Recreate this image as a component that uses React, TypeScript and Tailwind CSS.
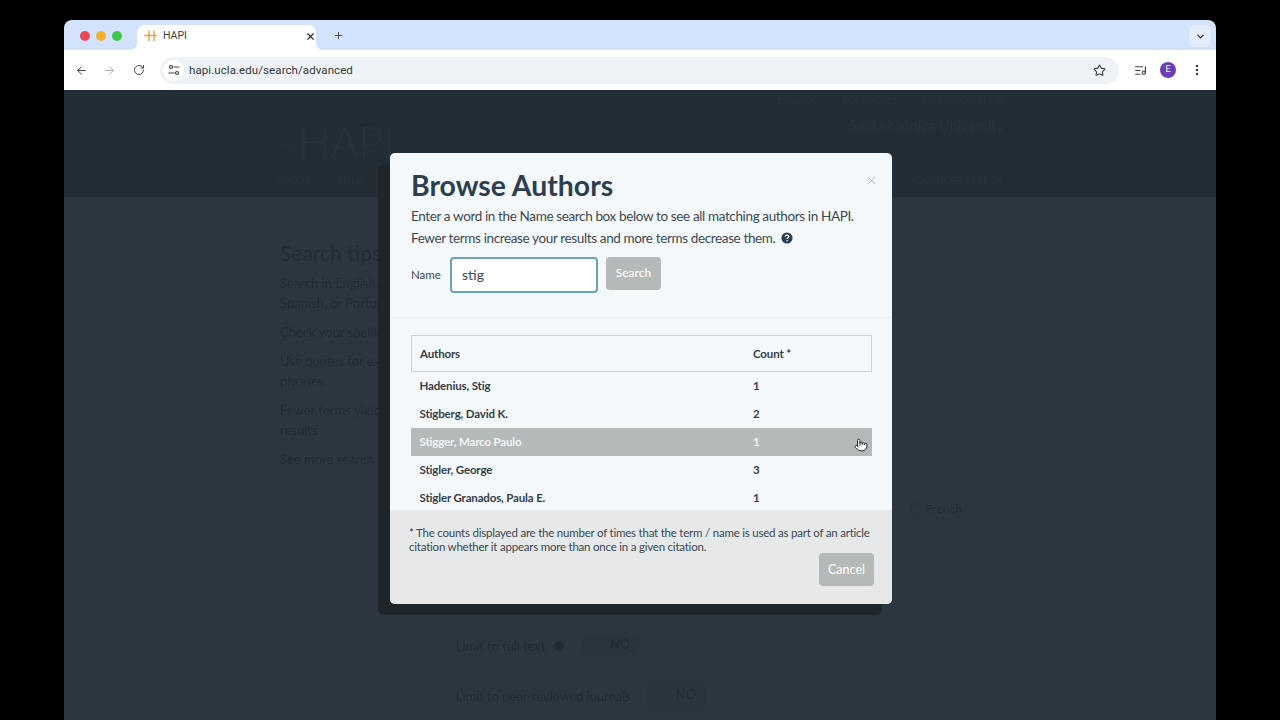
import React from "react";
import { ArrowLeft, ArrowRight, RotateCw, Star, ListMusic, MoreVertical, ChevronDown, X, Plus, Pointer } from "lucide-react";

const rows: [string, string][] = [
  ["Hadenius, Stig", "1"],
  ["Stigberg, David K.", "2"],
  ["Stigger, Marco Paulo", "1"],
  ["Stigler, George", "3"],
  ["Stigler Granados, Paula E.", "1"],
];

function Favicon() {
  return (
    <svg width="14" height="12" viewBox="0 0 14 12" fill="none" stroke="#f0a04b" strokeWidth="1.5">
      <path d="M0 5.5H13M5 0.5V11M10 0.5V11" />
    </svg>
  );
}

function Tune() {
  return (
    <svg width="12" height="12" viewBox="0 0 12 12" fill="none" stroke="#3c4043" strokeWidth="1.2">
      <circle cx="3" cy="3" r="1.5" />
      <path d="M5.5 3H11.5M0.5 9H6.5" />
      <circle cx="9" cy="9" r="1.5" />
    </svg>
  );
}

function Help() {
  return (
    <svg width="12" height="12" viewBox="0 0 12 12" fill="none">
      <circle cx="6" cy="6" r="5.6" fill="#2c3e50" />
      <path d="M4.2 4.6C4.3 3.6 5 3.1 6 3.1C7 3.1 7.8 3.7 7.8 4.6C7.8 5.7 6.1 5.7 6.1 7" stroke="#ffffff" strokeWidth="1.3" />
      <circle cx="6.1" cy="8.8" r="0.8" fill="#ffffff" />
    </svg>
  );
}

function Flare({ side }: { side: "left" | "right" }) {
  return (
    <svg
      width="8"
      height="8"
      viewBox="0 0 8 8"
      className={side === "left" ? "absolute -left-[8px] bottom-0" : "absolute -right-[8px] bottom-0"}
    >
      <path d={side === "left" ? "M8 0V8H0C5 8 8 5 8 0Z" : "M0 0V8H8C3 8 0 5 0 0Z"} fill="#ffffff" />
    </svg>
  );
}

function Background() {
  return (
    <div className="flex-1 flex flex-col bg-[#2b3640] overflow-hidden text-[#212b33] blur-[0.7px] font-['Lato',sans-serif]">
      <div className="h-[107px] bg-[#222d36] shrink-0 flex flex-col">
        <div className="flex justify-end gap-[25px] pt-[5px] pr-[211px] text-[9.2px] leading-[12px] text-[#28333d]">
          <span>ESPAÑOL</span>
          <span>PORTUGUÊS</span>
          <span>MY SAVED LISTS (0)</span>
        </div>
        <div className="flex items-start justify-between pl-[218px] pr-[212px]">
          <span className="text-[43px] leading-[43px] font-light text-[#27323c] mt-[13px]">-HAPI</span>
          <span className="text-[14.5px] leading-[18px] font-medium text-[#28333d] mt-[10px]">Santa Monica University</span>
        </div>
        <div className="flex justify-between pl-[213px] pr-[213px] mt-[10px] text-[9.7px] leading-[14px] text-[#28333d]">
          <div className="flex gap-[28px]">
            <span>ABOUT</span>
            <span>HELP</span>
          </div>
          <span>ADVANCED SEARCH</span>
        </div>
      </div>
      <div className="pl-[216px] pt-[42px] flex flex-col w-[340px]">
        <span className="text-[21px] leading-[28px]">Search tips</span>
        <div className="mt-[6px] text-[13px] leading-[20px] flex flex-col gap-[9px] w-[240px]">
          <p>Search in English,<br />Spanish, or Portuguese</p>
          <p>Check your spelling</p>
          <p>Use quotes for exact<br />phrases</p>
          <p>Fewer terms yields more<br />results</p>
          <p>See more search tips</p>
        </div>
      </div>
      <div className="flex justify-end items-center gap-[3px] pr-[254px] mt-[32px] text-[12px] leading-[16px]">
        <span className="w-[13px] h-[13px] rounded-full border border-[#29333c]" />
        <span>French</span>
      </div>
      <div className="pl-[392px] mt-[119px] flex items-center gap-[9px] text-[12.8px] leading-[16px]">
        <span>Limit to full text</span>
        <span className="w-[10px] h-[10px] rounded-full bg-[#212b33]" />
        <span className="ml-[8px] w-[60px] h-[20px] rounded-full bg-[#29343d] text-right pr-[11px]">NO</span>
      </div>
      <div className="pl-[392px] mt-[30px] flex items-center gap-[16px] text-[12.8px] leading-[16px]">
        <span>Limit to peer-reviewed journals</span>
        <span className="w-[59px] h-[20px] rounded bg-[#29343d] text-right pr-[10px]">NO</span>
      </div>
    </div>
  );
}

function Modal() {
  return (
    <>
      <div className="absolute left-[314px] top-[74px] w-[504px] h-[451px] bg-[#1e262c] rounded-md" />
      <div className="absolute left-[326px] top-[63px] w-[502px] h-[451px] bg-[#f5f8fa] rounded-[5px] flex flex-col overflow-hidden font-['Lato',sans-serif] text-[#2d3e4e]">
        <div className="h-[165px] shrink-0 border-b border-[#eceff1] pl-[21px] pt-[14px] relative">
          <h2 className="text-[28.4px] leading-[36px] font-bold text-[#2c3e50]">Browse Authors</h2>
          <X size={13} strokeWidth={1.8} className="absolute right-[14.5px] top-[20.5px] text-[#b1b9bd]" />
          <p className="mt-[2px] text-[13.5px] tracking-[-0.37px] leading-[22px] text-[#3c4852]">
            Enter a word in the Name search box below to see all matching authors in HAPI.
          </p>
          <p className="flex items-center gap-[6px] text-[13.5px] tracking-[-0.37px] leading-[22px] text-[#3c4852]">
            Fewer terms increase your results and more terms decrease them.
            <Help />
          </p>
          <div className="flex items-start mt-[8px]">
            <span className="text-[11.5px] leading-[35px] w-[39px] text-[#3c4852]">Name</span>
            <div className="w-[148px] h-[36px] border-2 border-[#6ba3bd] rounded bg-white pl-[10px] text-[14px] leading-[32px] text-[#3c4852]">
              stig
            </div>
            <button className="ml-[8px] w-[55px] h-[33px] rounded bg-[#b5bab9] text-white text-[12px] font-medium pb-[2px]">
              Search
            </button>
          </div>
        </div>
        <div className="h-[192px] shrink-0 overflow-hidden pt-[17px] pl-[21px] pr-[20px] text-[11.5px] tracking-[-0.15px] font-bold text-[#343f48]">
          <div className="h-[37px] border border-[#cfd3d5] flex items-center">
            <span className="pl-[8px] w-[341px]">Authors</span>
            <span>Count *</span>
          </div>
          {rows.map(([name, count], i) => (
            <div key={name} className={i === 2 ? "h-[28px] flex items-center bg-[#b4bab9] text-[#f2f4f4] relative" : "h-[28px] flex items-center relative"}>
              <span className="pl-[8.5px] w-[342px]">{name}</span>
              <span>{count}</span>
              {i === 2 && (
                <Pointer size={14} strokeWidth={1.6} fill="#ffffff" className="absolute left-[443px] top-[10px] text-[#222222]" />
              )}
            </div>
          ))}
        </div>
        <div className="flex-1 bg-[#e6e8e9] pl-[19px] pr-[18px] pt-[16px] text-[11.5px] tracking-[-0.22px] leading-[13.5px] text-[#3c4852]">
          <p>* The counts displayed are the number of times that the term / name is used as part of an article citation whether it appears more than once in a given citation.</p>
          <div className="flex justify-end">
            <button className="w-[55px] h-[33px] rounded bg-[#b5bab9] text-white text-[12.5px] tracking-normal">Cancel</button>
          </div>
        </div>
      </div>
    </>
  );
}

export default function App() {
  return (
    <div className="w-[1280px] h-[720px] bg-black pl-[64px] pr-[64px] pt-[20px] overflow-hidden">
      <div className="h-[700px] flex flex-col rounded-t-lg overflow-hidden font-['Roboto',sans-serif]">
        <div className="h-[30px] shrink-0 bg-[#d3e3fd] flex items-end relative">
          <div className="flex gap-[6px] absolute left-[16px] top-[11px]">
            <span className="w-[10px] h-[10px] rounded-full bg-[#eb4a55]" />
            <span className="w-[10px] h-[10px] rounded-full bg-[#f2b02f]" />
            <span className="w-[10px] h-[10px] rounded-full bg-[#3fc94b]" />
          </div>
          <div className="relative ml-[73px] w-[179px] h-[25px] bg-white rounded-t-lg flex items-center pl-[7px] pb-[3px]">
            <Flare side="left" />
            <Favicon />
            <span className="ml-[5px] text-[10.5px] text-[#3c4043] flex-1">HAPI</span>
            <X size={11} strokeWidth={2.4} className="text-[#26282b]" />
          </div>
          <Plus size={11} strokeWidth={2} className="ml-[17px] mb-[9px] text-[#3c4043]" />
          <div className="absolute left-[252px] bottom-0">
            <Flare side="right" />
          </div>
          <div className="absolute right-[5px] top-[5px] w-[22px] h-[22px] rounded-md bg-[#e3edfc] flex items-center justify-center">
            <ChevronDown size={11} strokeWidth={2.6} className="text-[#2a2d31]" />
          </div>
        </div>
        <div className="h-[40px] shrink-0 bg-white flex items-center relative">
          <ArrowLeft size={13} strokeWidth={1.8} className="ml-[11px] text-[#3c4043]" />
          <ArrowRight size={13} strokeWidth={1.8} className="ml-[15px] text-[#a7aaad]" />
          <RotateCw size={12} strokeWidth={1.9} className="ml-[17px] text-[#3c4043]" />
          <div className="ml-[15px] w-[959px] h-[27px] rounded-full bg-[#eff3f8] flex items-center pl-[3px] pr-[13px]">
            <div className="w-[21px] h-[21px] rounded-full bg-white flex items-center justify-center">
              <Tune />
            </div>
            <span className="ml-[5px] text-[11.5px] leading-[16px] text-[#34383c] flex-1 tracking-[0.08px]">hapi.ucla.edu/search/advanced</span>
            <Star size={13} strokeWidth={2} className="text-[#3c4043]" />
          </div>
          <ListMusic size={13} strokeWidth={2} className="ml-[15px] text-[#3c4043]" />
          <div className="ml-[13px] w-[16px] h-[16px] rounded-full bg-[#6b3fb5] text-white text-[9px] flex items-center justify-center">E</div>
          <MoreVertical size={14} strokeWidth={2.4} className="ml-[14px] text-[#3c4043]" />
        </div>
        <div className="flex-1 relative flex flex-col overflow-hidden">
          <Background />
          <Modal />
        </div>
      </div>
    </div>
  );
}
